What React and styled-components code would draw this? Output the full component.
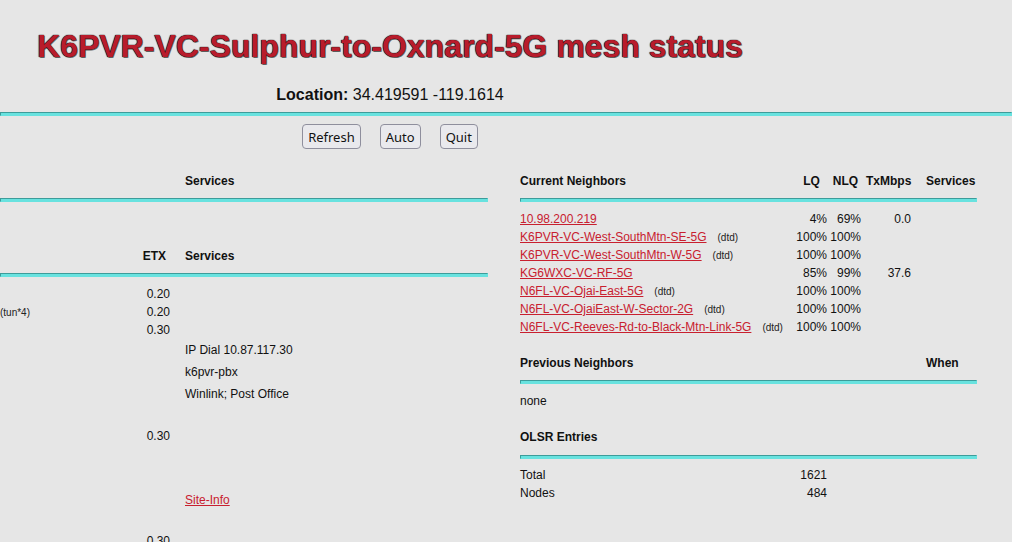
import React from 'react';
import styled, { createGlobalStyle } from 'styled-components';

const Global = createGlobalStyle`
  html, body { margin: 0; padding: 0; background: #e6e6e6; }
  body {
    font-family: "Liberation Sans", Arial, sans-serif;
    font-size: 12px;
    color: #111;
    overflow: hidden;
  }
`;

const Page = styled.div`
  width: 1012px;
  min-height: 542px;
`;

const Title = styled.h1`
  margin: 0;
  padding: 28px 0 0 37px;
  font-size: 32px;
  line-height: 36px;
  font-weight: bold;
  color: #b81c2c;
  white-space: nowrap;
  text-shadow: 0 0 1px #000, 0 0 1px #000, 1px 1px 0 rgba(0,0,0,0.5);
`;

const CenterBlock = styled.div`
  width: 780px;
  text-align: center;
`;

const Location = styled(CenterBlock)`
  margin-top: 22px;
  font-size: 16px;
  line-height: 18px;
  b { font-weight: bold; }
`;

const Rule = styled.div`
  height: 2px;
  background: #68e2df;
  border-top: 1px solid #3d9c9a;
  border-left: 1px solid #3d9c9a;
  border-right: 1px solid #68e2df;
  border-bottom: 1px solid #68e2df;
  margin: ${(p) => p.$m || '8px 0 8px'};
`;

const ButtonBar = styled(CenterBlock)`
  display: flex;
  justify-content: center;
  gap: 19px;
  margin-top: 8px;
`;

const Button = styled.button`
  height: 25px;
  padding: 0 5px;
  background: #e9e9ed;
  border: 1px solid #8f8f9d;
  border-radius: 4px;
  font-family: "Noto Sans", sans-serif;
  font-size: 13px;
  color: #111;
`;

const Columns = styled.div`
  display: flex;
  align-items: flex-start;
  margin-top: 23px;
`;

const Panel = styled.div`
  width: ${(p) => p.$w}px;
  margin-left: ${(p) => p.$ml || 0}px;
  flex: none;
`;

const Section = styled.div`
  & + & { margin-top: 18px; }
`;

const Grid = styled.div`
  display: grid;
  grid-template-columns: ${(p) => p.$cols};
`;

const HeadCell = styled.div`
  height: 18px;
  line-height: 18px;
  font-weight: bold;
  white-space: nowrap;
  text-align: ${(p) => p.$align || 'left'};
  padding-left: ${(p) => p.$pl || 0}px;
  padding-right: ${(p) => p.$pr || 0}px;
`;

const Cell = styled.div`
  height: ${(p) => p.$h || 18}px;
  line-height: ${(p) => p.$h || 18}px;
  white-space: nowrap;
  text-align: ${(p) => p.$align || 'left'};
  padding-left: ${(p) => p.$pl || 0}px;
`;

const Link = styled.a`
  color: #c8202f;
  text-decoration: underline;
`;

const Small = styled.span`
  font-size: 10px;
  color: #222;
  margin-left: ${(p) => p.$ml || 0}px;
`;

const LEFT_COLS = '139px 31px 318px';
const RIGHT_COLS = '276px 31px 34px 50px 66px';

const remoteRows = [
  { kind: 'node', etx: '0.20' },
  { kind: 'node', etx: '0.20', tag: '(tun*4)' },
  { kind: 'node', etx: '0.30' },
  { kind: 'svc', text: 'IP Dial 10.87.117.30' },
  { kind: 'svc', text: 'k6pvr-pbx' },
  { kind: 'svc', text: 'Winlink; Post Office' },
  { kind: 'svc' },
  { kind: 'node', etx: '0.30' },
  { kind: 'svc' },
  { kind: 'svc' },
  { kind: 'svc', link: 'Site-Info' },
  { kind: 'svc', h: 21 },
  { kind: 'node', etx: '0.30' },
];

const neighbors = [
  { name: '10.98.200.219', lq: '4%', nlq: '69%', tx: '0.0' },
  { name: 'K6PVR-VC-West-SouthMtn-SE-5G', dtd: true, lq: '100%', nlq: '100%' },
  { name: 'K6PVR-VC-West-SouthMtn-W-5G', dtd: true, lq: '100%', nlq: '100%' },
  { name: 'KG6WXC-VC-RF-5G', lq: '85%', nlq: '99%', tx: '37.6' },
  { name: 'N6FL-VC-Ojai-East-5G', dtd: true, lq: '100%', nlq: '100%' },
  { name: 'N6FL-VC-OjaiEast-W-Sector-2G', dtd: true, lq: '100%', nlq: '100%' },
  { name: 'N6FL-VC-Reeves-Rd-to-Black-Mtn-Link-5G', dtd: true, lq: '100%', nlq: '100%' },
];

function LeftPanel() {
  return (
    <Panel $w={488}>
      <Section>
        <Grid $cols={LEFT_COLS}>
          <HeadCell />
          <HeadCell />
          <HeadCell $pl={15}>Services</HeadCell>
        </Grid>
        <Rule />
        <Grid $cols={LEFT_COLS}>
          <Cell $h={19} />
          <Cell $h={19} />
          <Cell $h={19} />
        </Grid>
      </Section>
      <Section>
        <Grid $cols={LEFT_COLS}>
          <HeadCell />
          <HeadCell $align="right" $pr={4}>ETX</HeadCell>
          <HeadCell $pl={15}>Services</HeadCell>
        </Grid>
        <Rule />
        <Grid $cols={LEFT_COLS}>
          {remoteRows.map((r, i) =>
            r.kind === 'node' ? (
              <React.Fragment key={i}>
                <Cell>{r.tag && <Small>{r.tag}</Small>}</Cell>
                <Cell $align="right">{r.etx}</Cell>
                <Cell $pl={15} />
              </React.Fragment>
            ) : (
              <React.Fragment key={i}>
                <Cell $h={r.h || 22} />
                <Cell $h={r.h || 22} />
                <Cell $h={r.h || 22} $pl={15}>
                  {r.text}
                  {r.link && <Link href="#">{r.link}</Link>}
                </Cell>
              </React.Fragment>
            )
          )}
        </Grid>
      </Section>
    </Panel>
  );
}

function RightPanel() {
  return (
    <Panel $w={457} $ml={32}>
      <Section>
        <Grid $cols={RIGHT_COLS}>
          <HeadCell>Current Neighbors</HeadCell>
          <HeadCell $align="center">LQ</HeadCell>
          <HeadCell $align="center" $pl={3}>NLQ</HeadCell>
          <HeadCell $align="center" $pl={5}>TxMbps</HeadCell>
          <HeadCell $pl={15}>Services</HeadCell>
        </Grid>
        <Rule />
        <Grid $cols={RIGHT_COLS}>
          {neighbors.map((n) => (
            <React.Fragment key={n.name}>
              <Cell>
                <Link href="#">{n.name}</Link>
                {n.dtd && <Small $ml={11}>(dtd)</Small>}
              </Cell>
              <Cell $align="right">{n.lq}</Cell>
              <Cell $align="right">{n.nlq}</Cell>
              <Cell $align="right">{n.tx || ''}</Cell>
              <Cell $pl={15} />
            </React.Fragment>
          ))}
        </Grid>
      </Section>
      <Section>
        <Grid $cols={RIGHT_COLS}>
          <HeadCell>Previous Neighbors</HeadCell>
          <HeadCell />
          <HeadCell />
          <HeadCell />
          <HeadCell $pl={15}>When</HeadCell>
        </Grid>
        <Rule />
        <Grid $cols={RIGHT_COLS}>
          <Cell>none</Cell>
        </Grid>
      </Section>
      <Section>
        <Grid $cols={RIGHT_COLS}>
          <HeadCell>OLSR Entries</HeadCell>
        </Grid>
        <Rule $m="9px 0 7px" />
        <Grid $cols={RIGHT_COLS}>
          <Cell>Total</Cell>
          <Cell $align="right">1621</Cell>
          <Cell />
          <Cell />
          <Cell />
          <Cell>Nodes</Cell>
          <Cell $align="right">484</Cell>
          <Cell />
          <Cell />
          <Cell />
        </Grid>
      </Section>
    </Panel>
  );
}

export default function App() {
  return (
    <Page>
      <Global />
      <Title>K6PVR-VC-Sulphur-to-Oxnard-5G mesh status</Title>
      <Location>
        <b>Location:</b> 34.419591 -119.1614
      </Location>
      <Rule $m="8px 0 0" />
      <ButtonBar>
        <Button>Refresh</Button>
        <Button>Auto</Button>
        <Button>Quit</Button>
      </ButtonBar>
      <Columns>
        <LeftPanel />
        <RightPanel />
      </Columns>
    </Page>
  );
}
